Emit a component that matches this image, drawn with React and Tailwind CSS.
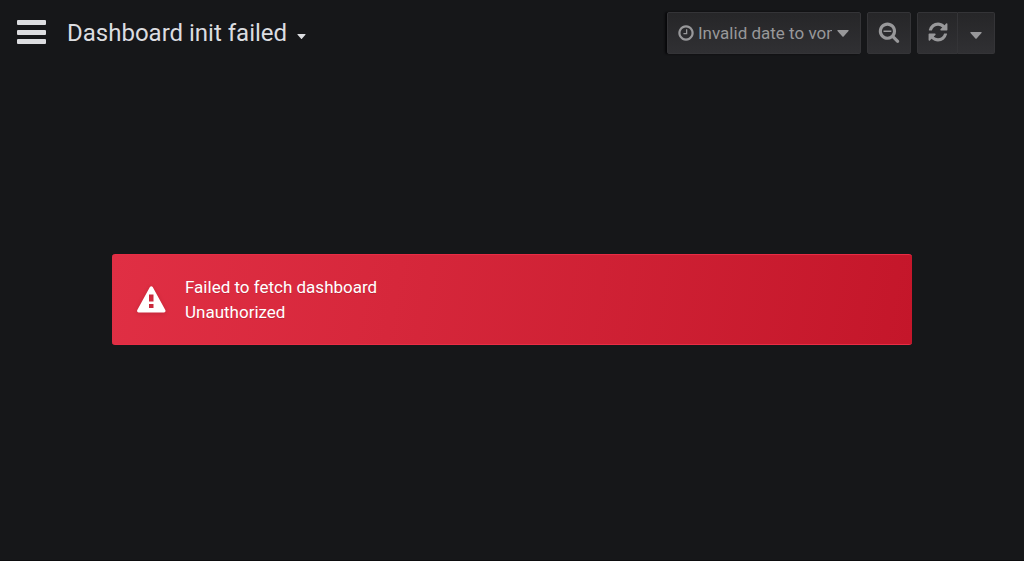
function FaIcon({ d, className }) {
  return (
    <svg viewBox="0 0 1792 1792" fill="currentColor" aria-hidden="true" className={className}>
      <path d={d} />
    </svg>
  )
}

function Caret({ className }) {
  return (
    <svg viewBox="0 0 12 7" fill="currentColor" aria-hidden="true" className={className}>
      <path d="M.8 0h10.400q.8.2.3 1L6.600 6.600q-.6.500-1.200 0L.5 1Q0 .2.800 0z" />
    </svg>
  )
}

const clock =
  'M1024 544v448q0 14-9 23t-23 9h-320q-14 0-23-9t-9-23v-64q0-14 9-23t23-9h224v-352q0-14 9-23t23-9h64q14 0 23 9t9 23zm416 352q0-148-73-273t-198-198-273-73-273 73-198 198-73 273 73 273 198 198 273 73 273-73 198-198 73-273zm224 0q0 209-103 385.500t-279.500 279.500-385.500 103-385.500-103-279.500-279.500-103-385.500 103-385.500 279.500-279.500 385.500-103 385.500 103 279.500 279.500 103 385.500z'
const searchMinus =
  'M448 770h640v120h-640zM1216 832q0-185-131.500-316.500t-316.500-131.500-316.500 131.500-131.500 316.500 131.500 316.500 316.500 131.500 316.500-131.500 131.500-316.500zm512 832q0 53-37.500 90.500t-90.500 37.500q-54 0-90-38l-343-342q-179 124-399 124-143 0-273.500-55.500t-225-150-150-225-55.500-273.500 55.500-273.500 150-225 225-150 273.500-55.500 273.500 55.500 225 150 150 225 55.500 273.500q0 220-124 399l343 343q37 37 37 90z'
const refresh =
  'M1639 1056q0 5-1 7-64 268-268 434.500t-478 166.500q-146 0-282.500-55t-243.500-157l-129 129q-19 19-45 19t-45-19-19-45v-448q0-26 19-45t45-19h448q26 0 45 19t19 45-19 45l-137 137q71 66 161 102t187 36q134 0 250-65t186-179q11-17 53-117 8-23 30-23h192q13 0 22.500 9.500t9.500 22.500zm25-800v448q0 26-19 45t-45 19h-448q-26 0-45-19t-19-45 19-45l138-138q-148-137-349-137-134 0-250 65t-186 179q-11 17-53 117-8 23-30 23h-199q-13 0-22.500-9.500t-9.500-22.500v-7q65-268 270-434.500t480-166.500q146 0 284 55.500t245 156.500l130-129q19-19 45-19t45 19 19 45z'

function Navbar() {
  return (
    <header className="flex items-start justify-between gap-4 pt-3 pr-[29px] pl-[17px]">
      <div className="flex h-[42px] items-center gap-5 text-[#dcdde0]">
        <button type="button" aria-label="Toggle menu" className="shrink-0 pb-0.5">
          <svg viewBox="0 0 30 24" fill="currentColor" className="h-6 w-[30px]">
            <rect x="0" y="0" width="29" height="5" rx="1" />
            <rect x="0" y="10" width="29" height="5" rx="1" />
            <rect x="0" y="19" width="29" height="5" rx="1" />
          </svg>
        </button>
        <button type="button" className="flex items-center gap-2.5 text-2xl whitespace-nowrap">
          Dashboard init failed
          <Caret className="mt-1.5 h-[5px] w-[9px]" />
        </button>
      </div>
      <div className="flex gap-1.5 text-[#98989a]">
        <button
          type="button"
          className="flex h-[42px] w-[194px] items-center rounded-xs border border-[#343437] bg-linear-to-b from-[#262628] to-[#303033] pl-[9px] text-[17px] shadow-[-2px_0_2px_#08080a]"
        >
          <FaIcon d={clock} className="mr-[3px] h-[18px] w-[18px] shrink-0" />
          <span className="w-[134px] overflow-hidden pt-0.5 text-left whitespace-nowrap">Invalid date to von</span>
          <Caret className="ml-[5px] h-[7px] w-3 shrink-0" />
        </button>
        <button
          type="button"
          aria-label="Zoom out"
          className="flex h-[42px] w-11 items-center justify-center rounded-xs border border-[#343437] bg-linear-to-b from-[#262628] to-[#303033] pb-0.5"
        >
          <FaIcon d={searchMinus} className="h-[22px] w-[22px]" />
        </button>
        <div className="flex">
          <button
            type="button"
            aria-label="Refresh dashboard"
            className="flex h-[42px] w-[41px] items-center justify-center rounded-l-xs border border-[#343437] bg-linear-to-b from-[#262628] to-[#303033] pb-0.5"
          >
            <FaIcon d={refresh} className="h-[22px] w-[22px]" />
          </button>
          <button
            type="button"
            aria-label="Refresh interval"
            className="flex h-[42px] w-[37px] items-center justify-center rounded-r-xs border border-l-0 border-[#343437] bg-linear-to-b from-[#262628] to-[#303033]"
          >
            <Caret className="mt-1 h-[7px] w-3" />
          </button>
        </div>
      </div>
    </header>
  )
}

export default function App() {
  return (
    <div className="min-h-screen border-b border-[#0c0c0e] bg-[#161719] font-['Roboto',sans-serif]">
      <Navbar />
      <main className="px-4 pt-[200px]">
        <div
          role="alert"
          className="mx-auto flex max-w-[800px] items-center gap-[19px] rounded-[3px] border-y border-[#e92d45] bg-linear-100 from-[#e02f44] to-[#c4162a] px-[25px] pt-5 pb-[19px] text-white"
        >
          <svg viewBox="0 0 29 27" aria-hidden="true" className="mb-0.5 h-[27px] w-[29px] shrink-0 drop-shadow-sm">
            <path
              fill="currentColor"
              fillRule="evenodd"
              d="M12.900 1q1.400-1.500 2.800 0L28.300 24q.8 2.200-1.300 2.500H1.600Q-.5 26.200.3 24zM12 8.500v7h4.500v-7zM12 18v4h4.500v-4z"
            />
          </svg>
          <div className="text-[17px] leading-[25px] text-shadow-2xs">
            <div>Failed to fetch dashboard</div>
            <div>Unauthorized</div>
          </div>
        </div>
      </main>
    </div>
  )
}
